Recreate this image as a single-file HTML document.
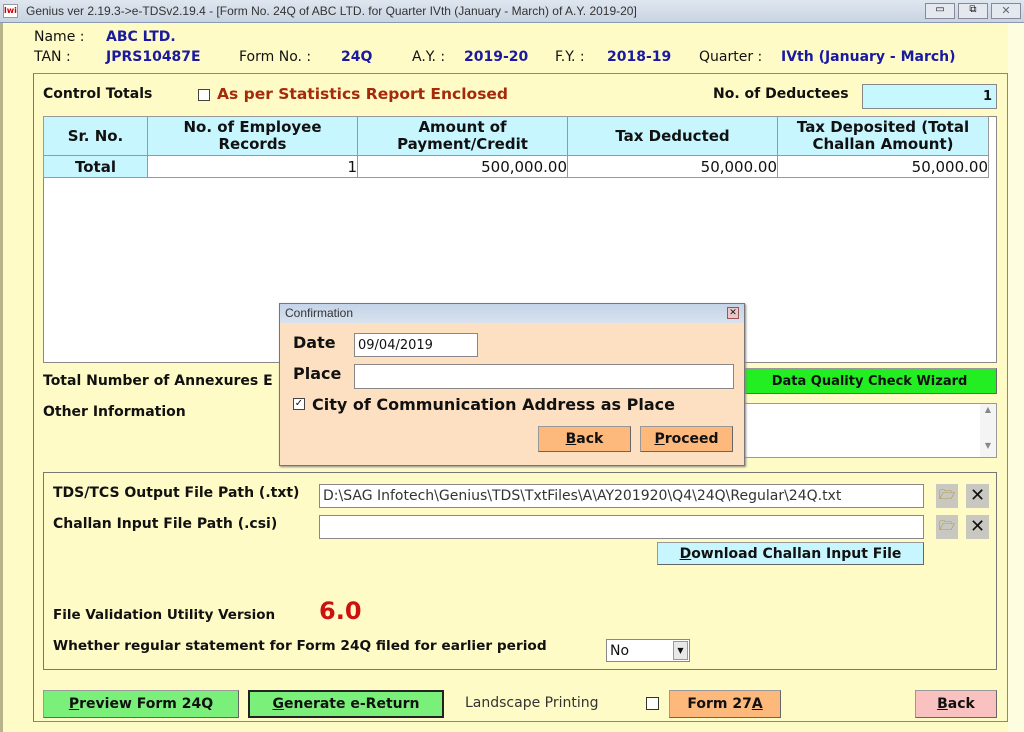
<!DOCTYPE html><html><head><style>
*{box-sizing:border-box;margin:0;padding:0}
body{width:1024px;height:732px;overflow:hidden;background:#fffbc6;font-family:"DejaVu Sans","Liberation Sans",sans-serif;position:relative;font-size:13px;color:#111}
.a{position:absolute;white-space:nowrap}
.b{font-weight:bold}
.blue{color:#1a1aa0;font-weight:bold}
.btn{position:absolute;display:flex;align-items:center;justify-content:center;font-weight:bold;font-size:13px;border:1px solid #999;border-right-color:#666;border-bottom-color:#666}
.in{position:absolute;background:#fff;border:1px solid #888;font-size:13px;padding-left:3px;display:flex;align-items:center}
table{border-collapse:collapse}
td{border:1px solid #999;font-size:13px}
u{text-decoration:underline}
</style></head><body>
<div class="a" style="left:0;top:0;width:1024px;height:23px;background:linear-gradient(#dfe6ef,#c9d4e2);border-bottom:1px solid #8a9ab0"></div>
<div class="a" style="left:3px;top:4px;width:15px;height:14px;background:#fff;border:1px solid #999;font-size:8px;color:#c00;font-weight:bold;line-height:12px">lwi</div>
<div class="a" style="left:26px;top:4px;font-family:'Liberation Sans',sans-serif;font-size:12px;color:#333">Genius ver 2.19.3-&gt;e-TDSv2.19.4 - [Form No. 24Q of ABC LTD. for Quarter IVth (January - March) of A.Y. 2019-20]</div>
<div class="a" style="left:925px;top:3px;width:30px;height:16px;border:1px solid #889;background:#e4e9f0;font-size:10px;text-align:center">▭</div>
<div class="a" style="left:958px;top:3px;width:30px;height:16px;border:1px solid #889;background:#e4e9f0;font-size:10px;text-align:center">⧉</div>
<div class="a" style="left:991px;top:3px;width:30px;height:16px;border:1px solid #889;background:#e4e9f0;font-size:11px;text-align:center;color:#667">✕</div>
<div class="a" style="left:0;top:23px;width:3px;height:709px;background:#b8b48a"></div>
<div class="a" style="left:1008px;top:23px;width:16px;height:709px;background:#fffde0"></div>

<div class="a" style="left:34px;top:29px;font-size:14px">Name :</div>
<div class="a blue" style="left:106px;top:29px;font-size:14px">ABC LTD.</div>
<div class="a" style="left:34px;top:49px;font-size:14px">TAN :</div>
<div class="a blue" style="left:106px;top:49px;font-size:14px">JPRS10487E</div>
<div class="a" style="left:239px;top:49px;font-size:14px">Form No. :</div>
<div class="a blue" style="left:341px;top:49px;font-size:14px">24Q</div>
<div class="a" style="left:412px;top:49px;font-size:14px">A.Y. :</div>
<div class="a blue" style="left:464px;top:49px;font-size:14px">2019-20</div>
<div class="a" style="left:555px;top:49px;font-size:14px">F.Y. :</div>
<div class="a blue" style="left:607px;top:49px;font-size:14px">2018-19</div>
<div class="a" style="left:699px;top:49px;font-size:14px">Quarter :</div>
<div class="a blue" style="left:781px;top:49px;font-size:14px">IVth (January - March)</div>

<div class="a" style="left:33px;top:73px;width:975px;height:649px;border:1px solid #888;border-left-color:#777"></div>
<div class="a b" style="left:43px;top:86px;font-size:14px">Control Totals</div>
<div class="a" style="left:198px;top:89px;width:12px;height:12px;border:1px solid #444;background:#fff"></div>
<div class="a b" style="left:217px;top:85px;font-size:15.5px;color:#a52a0a">As per Statistics Report Enclosed</div>
<div class="a b" style="left:713px;top:86px;font-size:14px">No. of Deductees</div>
<div class="in" style="left:862px;top:84px;width:135px;height:25px;background:#c8f8ff;justify-content:flex-end;padding-right:4px;font-weight:bold">1</div>

<div class="a" style="left:43px;top:116px;width:954px;height:247px;background:#fff;border:1px solid #888"></div>
<table class="a" style="left:43px;top:116px;width:946px">
<tr style="height:39px;background:#c8f6ff;font-weight:bold;text-align:center;line-height:17px">
<td style="width:104px;font-size:15px">Sr. No.</td><td style="width:210px;font-size:15px">No. of Employee<br>Records</td><td style="width:210px;font-size:15px">Amount of<br>Payment/Credit</td><td style="width:210px;font-size:15px">Tax Deducted</td><td style="font-size:15px">Tax Deposited (Total<br>Challan Amount)</td></tr>
<tr style="height:22px;text-align:right;font-size:15px"><td style="background:#c8f6ff;text-align:center;font-weight:bold;font-size:15px">Total</td><td style="font-size:15px">1</td><td style="font-size:15px">500,000.00</td><td style="font-size:15px">50,000.00</td><td style="font-size:15px">50,000.00</td></tr>
</table>

<div class="a b" style="left:43px;top:373px;font-size:14px">Total Number of Annexures E</div>
<div class="btn" style="left:742px;top:368px;width:255px;height:26px;background:#22ee22;font-size:13px">Data Quality Check Wizard</div>
<div class="a b" style="left:43px;top:404px;font-size:14px">Other Information</div>
<div class="a" style="left:742px;top:403px;width:255px;height:55px;background:#fff;border:1px solid #999"></div>
<div class="a" style="left:980px;top:404px;width:16px;height:53px;background:#f4f4f4;font-size:8px;color:#888;text-align:center;line-height:12px">▲<br><br><br>▼</div>

<div class="a" style="left:43px;top:472px;width:954px;height:198px;border:1px solid #777"></div>
<div class="a b" style="left:53px;top:485px;font-size:14px">TDS/TCS Output File Path (.txt)</div>
<div class="in" style="left:319px;top:484px;width:605px;height:24px;font-size:14px;color:#333">D:\SAG Infotech\Genius\TDS\TxtFiles\A\AY201920\Q4\24Q\Regular\24Q.txt</div>
<div class="a b" style="left:53px;top:516px;font-size:14px">Challan Input File Path (.csi)</div>
<div class="in" style="left:319px;top:515px;width:605px;height:24px"></div>
<div class="a" style="left:936px;top:484px;width:22px;height:24px;background:#c8c8c0;font-size:13px;text-align:center;line-height:24px;color:#a07000">🗁</div>
<div class="a" style="left:966px;top:484px;width:23px;height:24px;background:#c8c8c0;font-size:18px;text-align:center;line-height:24px">✕</div>
<div class="a" style="left:936px;top:515px;width:22px;height:24px;background:#c8c8c0;font-size:13px;text-align:center;line-height:24px;color:#a07000">🗁</div>
<div class="a" style="left:966px;top:515px;width:23px;height:24px;background:#c8c8c0;font-size:18px;text-align:center;line-height:24px">✕</div>
<div class="btn" style="left:657px;top:542px;width:267px;height:23px;background:#c8f6ff;font-size:14px"><span><u>D</u>ownload Challan Input File</span></div>
<div class="a b" style="left:53px;top:607px;font-size:13.5px">File Validation Utility Version</div>
<div class="a b" style="left:319px;top:597px;font-size:24px;color:#cc1111">6.0</div>
<div class="a b" style="left:53px;top:638px;font-size:13.7px">Whether regular statement for Form 24Q filed for earlier period</div>
<div class="in" style="left:606px;top:639px;width:84px;height:23px;font-size:14px">No</div>
<div class="a" style="left:673px;top:641px;width:15px;height:19px;background:#e8e8e8;border:1px solid #999;font-size:8px;text-align:center;line-height:17px">▼</div>

<div class="btn" style="left:43px;top:690px;width:196px;height:28px;background:#7af07a;font-size:14px"><span><u>P</u>review Form 24Q</span></div>
<div class="btn" style="left:248px;top:690px;width:196px;height:28px;background:#7af07a;border:2px solid #222;font-size:14px"><span><u>G</u>enerate e-Return</span></div>
<div class="a" style="left:465px;top:695px;font-size:14px;color:#333">Landscape Printing</div>
<div class="a" style="left:646px;top:697px;width:13px;height:13px;border:1px solid #333;background:#fff"></div>
<div class="btn" style="left:669px;top:690px;width:112px;height:28px;background:#fdb87c;font-size:14px"><span>Form 27<u>A</u></span></div>
<div class="btn" style="left:915px;top:690px;width:82px;height:28px;background:#f9c2c0;font-size:14px"><span><u>B</u>ack</span></div>

<div class="a" style="left:279px;top:303px;width:466px;height:163px;background:#fde0c2;border:1px solid #777;box-shadow:1px 1px 2px #888"></div>
<div class="a" style="left:280px;top:304px;width:464px;height:19px;background:linear-gradient(#c4d4e8,#d8e2ee)"></div>
<div class="a" style="left:285px;top:306px;font-family:'Liberation Sans',sans-serif;font-size:12px;color:#333">Confirmation</div>
<div class="a" style="left:727px;top:307px;width:12px;height:12px;border:1px solid #955;background:#e8c8c8;font-size:9px;line-height:10px;text-align:center">✕</div>
<div class="a b" style="left:293px;top:333px;font-size:16px">Date</div>
<div class="in" style="left:354px;top:333px;width:124px;height:24px;font-size:13px">09/04/2019</div>
<div class="a b" style="left:293px;top:364px;font-size:16px">Place</div>
<div class="in" style="left:354px;top:364px;width:380px;height:25px"></div>
<div class="a" style="left:293px;top:398px;width:12px;height:12px;border:1px solid #444;background:#fff;font-size:10px;line-height:10px;text-align:center">✓</div>
<div class="a b" style="left:312px;top:395px;font-size:16px">City of Communication Address as Place</div>
<div class="btn" style="left:538px;top:426px;width:93px;height:26px;background:#fdb87c;font-size:14px"><span><u>B</u>ack</span></div>
<div class="btn" style="left:640px;top:426px;width:93px;height:26px;background:#fdb87c;font-size:14px"><span><u>P</u>roceed</span></div>
</body></html>
